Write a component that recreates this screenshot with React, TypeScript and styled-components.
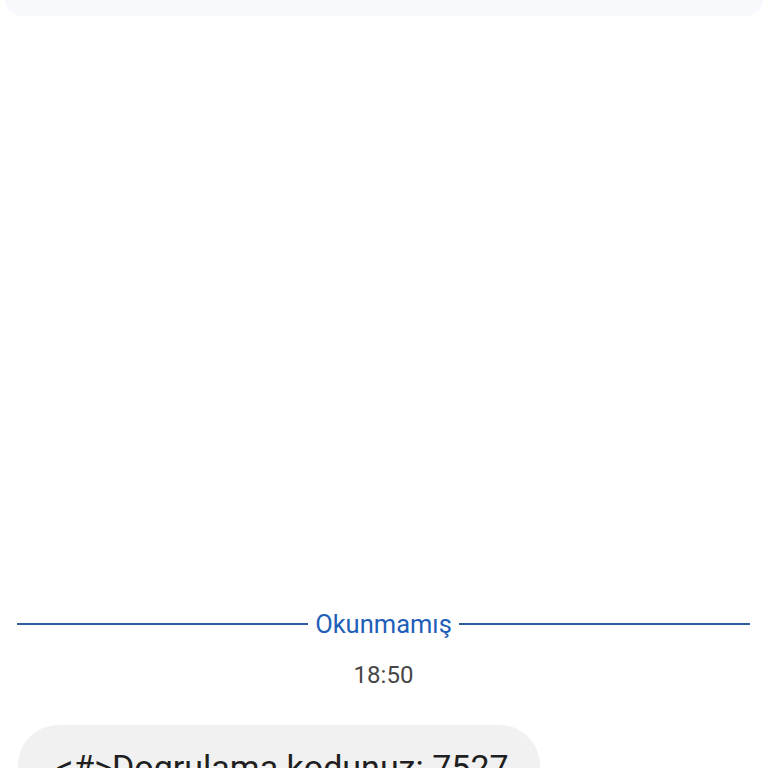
import React from 'react';
import styled, { createGlobalStyle } from 'styled-components';

const GlobalStyle = createGlobalStyle`
  html, body {
    margin: 0;
    padding: 0;
    background: #ffffff;
  }
  body {
    font-family: Roboto, "Noto Sans", "Liberation Sans", sans-serif;
  }
`;

const App: React.FC = () => {
  return (
    <Screen>
      <GlobalStyle />
      <TopCard />
      <Feed>
        <UnreadDivider>
          <Line />
          <UnreadLabel>Okunmamış</UnreadLabel>
          <Line />
        </UnreadDivider>
        <Time>18:50</Time>
        <Bubble>
          <BubbleText>&lt;#&gt;Dogrulama kodunuz: 7527</BubbleText>
        </Bubble>
      </Feed>
    </Screen>
  );
};

const Screen = styled.div`
  width: 768px;
  height: 768px;
  overflow: hidden;
  display: flex;
  flex-direction: column;
`;

const TopCard = styled.div`
  height: 16px;
  margin: 0 5px;
  background: #f8f9fd;
  border-radius: 0 0 22px 22px;
  flex-shrink: 0;
`;

const Feed = styled.div`
  display: flex;
  flex-direction: column;
  padding: 0 18px 0 17px;
  margin-top: 593px;
`;

const UnreadDivider = styled.div`
  display: flex;
  align-items: center;
  gap: 7px;
  height: 30px;
`;

const Line = styled.div`
  flex: 1;
  height: 2px;
  background: #2d5f9e;
`;

const UnreadLabel = styled.span`
  font-size: 25.5px;
  color: #1f5fb8;
  line-height: 30px;
`;

const Time = styled.div`
  margin-top: 20px;
  text-align: center;
  font-size: 24px;
  line-height: 32px;
  color: #474747;
`;

const Bubble = styled.div`
  margin-top: 34px;
  margin-left: 1px;
  width: 522px;
  height: 100px;
  box-sizing: border-box;
  background: #f1f1f1;
  border-radius: 40px;
  padding: 22px 0 0 38px;
`;

const BubbleText = styled.div`
  font-size: 34px;
  line-height: 40px;
  color: #1f1f1f;
  white-space: nowrap;
`;

export default App;
